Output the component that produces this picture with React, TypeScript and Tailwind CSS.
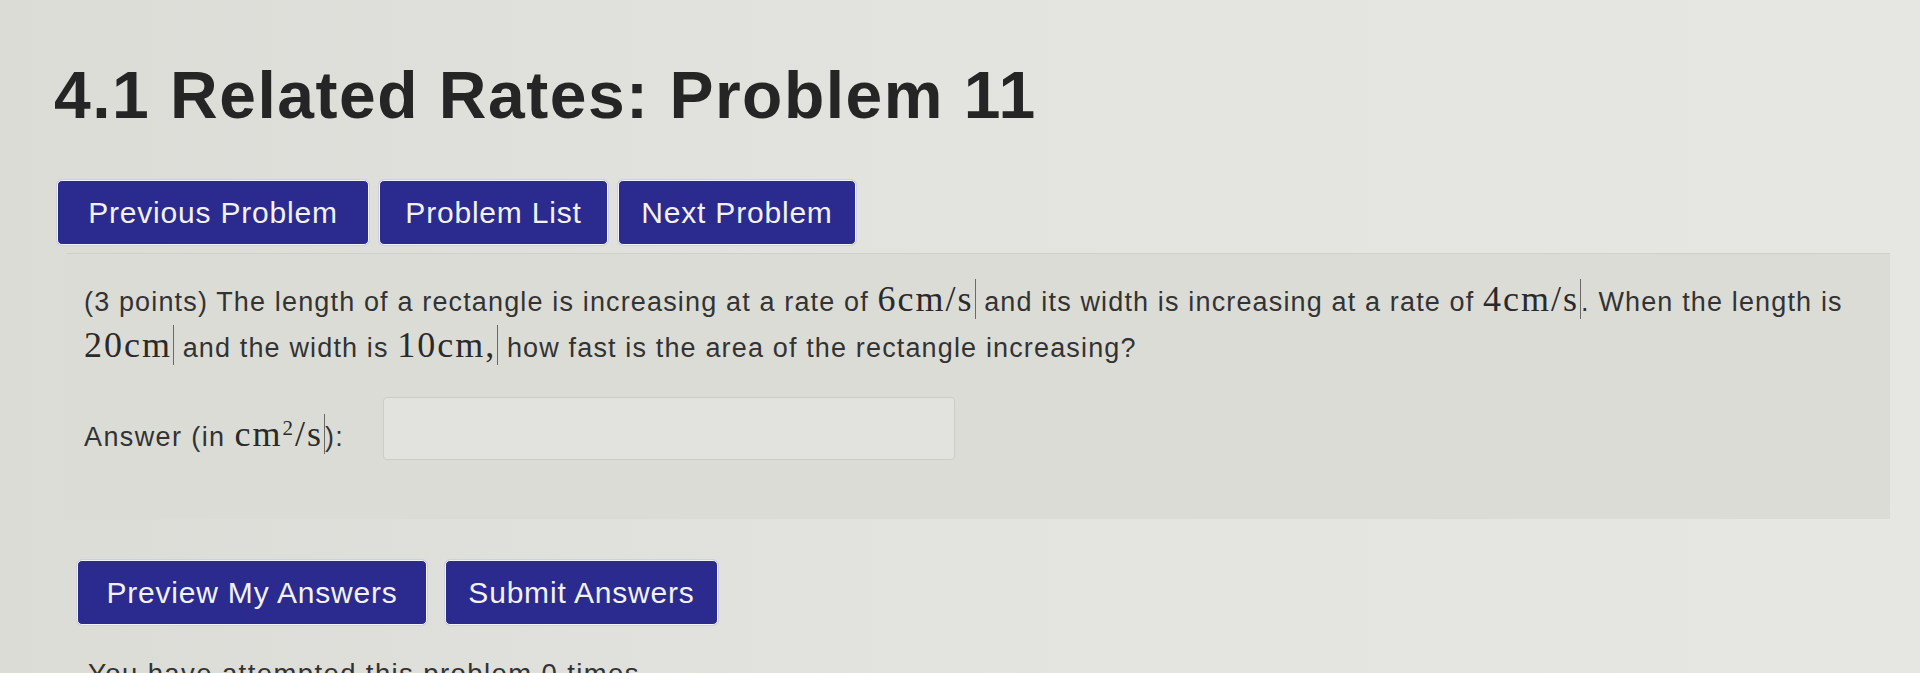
const sans = { fontFamily: '"Liberation Sans", Arial, sans-serif' };

function Math({ children, bar = true }: { children: React.ReactNode; bar?: boolean }) {
  return (
    <span
      className={
        'leading-none text-[36px] tracking-[2px] text-[#2a2a2a] ' + (bar ? 'border-r border-[#6a6a6a] pr-[1px]' : '')
      }
      style={{ fontFamily: '"Liberation Serif", "Times New Roman", serif' }}
    >
      {children}
    </span>
  );
}

function NavButton({ label, width }: { label: string; width: string }) {
  return (
    <button
      className={
        'flex h-[65px] items-center justify-center rounded-[5px] border border-[#f4f4f8] bg-[#2b2a8e] text-[30px] tracking-[0.8px] text-[#f2f2f6] shadow-[0_0_0_1px_#cfd0de] ' +
        width
      }
    >
      {label}
    </button>
  );
}

export default function App() {
  return (
    <div
      className="h-[673px] overflow-hidden bg-gradient-to-r from-[#dcdcd7] via-[#e3e3df] to-[#e6e6e2] pl-[54px] pt-[62px] text-[#2e2e2e]"
      style={sans}
    >
      <h1 className="text-[66px] font-bold leading-none tracking-[1.5px] text-[#252525]">4.1 Related Rates: Problem 11</h1>

      <div className="ml-[3px] mt-[52px] flex gap-[10px]">
        <NavButton label="Previous Problem" width="w-[312px]" />
        <NavButton label="Problem List" width="w-[229px]" />
        <NavButton label="Next Problem" width="w-[238px]" />
      </div>

      <div className="ml-[13px] mt-[8px] h-[266px] w-[1823px] border-t border-[#d0d0cb] bg-[#dcdcd7] pl-[17px] pt-[25px]">
        <p className="whitespace-nowrap text-[27px] leading-[46px] tracking-[1.15px] text-[#333]">
          (3 points) The length of a rectangle is increasing at a rate of <Math>6cm/s</Math> and its width is
          increasing at a rate of <Math>4cm/s</Math>. When the length is
          <br />
          <Math>20cm</Math> and the width is <Math>10cm,</Math> how fast is the area of the rectangle increasing?
        </p>

        <div className="mt-[26px] flex items-center">
          <span className="w-[299px] pt-[10px] text-[27px] leading-none tracking-[1.4px] text-[#333]">
            Answer (in{' '}
            <Math>
              cm<sup className="text-[21px]">2</sup>/s
            </Math>
            ):
          </span>
          <div className="h-[63px] w-[572px] rounded-[4px] border border-[#cdcdc8] bg-[#e2e2de]" />
        </div>
      </div>

      <div className="ml-[23px] mt-[41px] flex gap-[18px]">
        <NavButton label="Preview My Answers" width="w-[350px]" />
        <NavButton label="Submit Answers" width="w-[273px]" />
      </div>

      <p className="ml-[34px] mt-[26px] text-[27.5px] leading-[46px] tracking-[1.4px] text-[#333]">
        You have attempted this problem 0 times.
      </p>
    </div>
  );
}
